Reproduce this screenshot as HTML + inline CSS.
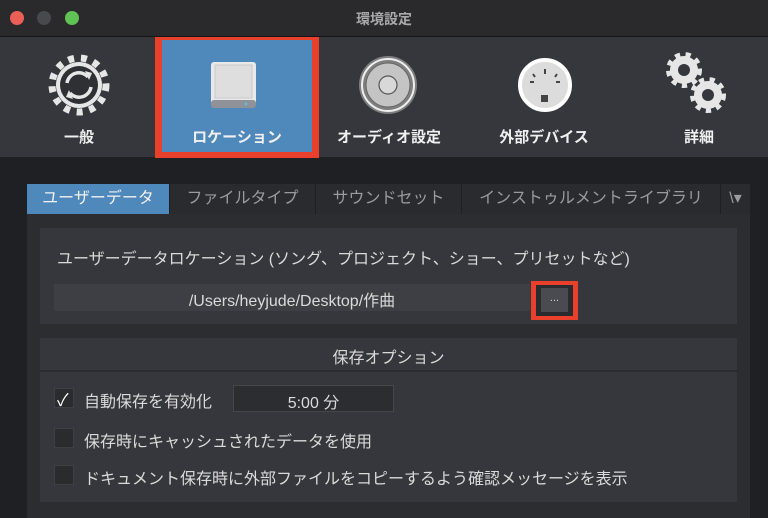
<!DOCTYPE html>
<html><head><meta charset="utf-8"><style>
*{margin:0;padding:0;box-sizing:border-box}
body{width:768px;height:518px;overflow:hidden;background:#1f2023;font-family:"Liberation Sans","Noto Sans CJK JP",sans-serif;position:relative;color:#dcdcdc}
.abs{position:absolute}
.title{left:0;top:0;width:768px;height:37px;background:#2a2a2c;border-bottom:1px solid #161618}
.tb{left:0;top:37px;width:768px;height:120px;background:#35373c}
.lbl{top:126px;font-size:15px;font-weight:bold;color:#f0f0f0;text-align:center;width:150px}
.dot{width:14px;height:14px;border-radius:50%;top:11px}
.tab{top:184px;height:30px;font-size:16px;color:#9a9b9f;text-align:center;line-height:30px;background:#2a2b2f;border-right:1px solid #1e1f22;white-space:nowrap}
.txt{font-size:16px;color:#dadada;white-space:nowrap}
.cb{width:20px;height:20px;border:1px solid #3f4045;background:#2a2b2f;left:54px}
</style></head><body>
<div class="abs title"></div>
<div class="abs dot" style="left:10px;background:#ec5f57"></div>
<div class="abs dot" style="left:37px;background:#48494c"></div>
<div class="abs dot" style="left:65px;background:#5fc453"></div>
<div class="abs" style="left:0;width:768px;top:9px;text-align:center;font-size:14px;font-weight:bold;color:#a9a9ab">環境設定</div>
<div class="abs tb"></div>
<div class="abs" style="left:155px;top:37px;width:164px;height:121px;background:#e8402a"></div>
<div class="abs" style="left:162px;top:40px;width:150px;height:112px;background:#4f88bb"></div>
<svg class="abs" style="left:0;top:37px" width="768" height="90" viewBox="0 37 768 90">
 <circle cx="79" cy="85" r="23" fill="#e6e6e6"/>
 <circle cx="79" cy="85" r="27" fill="none" stroke="#e6e6e6" stroke-width="7" stroke-dasharray="6 6.9"/>
 <circle cx="79" cy="85" r="19" fill="#2e3034"/>
 <path d="M67 83a12 12 0 0 1 21-6" stroke="#e6e6e6" stroke-width="3.5" fill="none"/><path d="M85 71l7 2-3 7z" fill="#e6e6e6"/>
 <path d="M91 87a12 12 0 0 1-21 6" stroke="#e6e6e6" stroke-width="3.5" fill="none"/><path d="M73 99l-7-2 3-7z" fill="#e6e6e6"/>
 <rect x="211" y="62" width="45" height="44" rx="3" fill="#e9e9e9"/>
 <rect x="215" y="65" width="37" height="33" fill="#dedede" stroke="#c9c9c9"/>
 <rect x="211" y="100" width="45" height="8" rx="3" fill="#8f9399"/>
 <circle cx="246" cy="104" r="1.3" fill="#5bc0f0"/>
 <circle cx="388" cy="85" r="29" fill="#7f7f7f"/><circle cx="388" cy="85" r="26" fill="none" stroke="#eee" stroke-width="2"/>
 <circle cx="388" cy="85" r="22" fill="#c4c4c4" stroke="#666" stroke-width="1"/><circle cx="388" cy="85" r="9" fill="#d8d8d8" stroke="#555" stroke-width="1.2"/>
 <circle cx="545" cy="85" r="25" fill="#dcdcdc" stroke="#fff" stroke-width="4"/>
 <g stroke="#444" stroke-width="2"><path d="M545 69v5M533 74l2 3M557 74l-2 3M530 82h4M556 82h4"/></g>
 <rect x="541" y="95" width="7" height="7" fill="#444"/>
 <g fill="#e6e6e6"><circle cx="684" cy="70" r="14"/><circle cx="708" cy="95" r="14"/></g>
 <g stroke="#e6e6e6" stroke-width="6" stroke-dasharray="5 5.3"><circle cx="684" cy="70" r="15" fill="none"/><circle cx="708" cy="95" r="15" fill="none"/></g>
 <circle cx="684" cy="70" r="6" fill="#35373c"/><circle cx="708" cy="95" r="6" fill="#35373c"/>
</svg>
<div class="abs lbl" style="left:4px">一般</div>
<div class="abs lbl" style="left:162px">ロケーション</div>
<div class="abs lbl" style="left:314px">オーディオ設定</div>
<div class="abs lbl" style="left:469px">外部デバイス</div>
<div class="abs lbl" style="left:624px">詳細</div>
<div class="abs" style="left:27px;top:184px;width:723px;height:334px;background:#2c2d31"></div>
<div class="abs tab" style="left:27px;width:143px;background:#4f88bb;color:#f2f2f2">ユーザーデータ</div>
<div class="abs tab" style="left:170px;width:146px">ファイルタイプ</div>
<div class="abs tab" style="left:316px;width:146px">サウンドセット</div>
<div class="abs tab" style="left:462px;width:259px">インストゥルメントライブラリ</div>
<div class="abs tab" style="left:721px;width:29px;border:none">\▾</div>
<div class="abs" style="left:40px;top:228px;width:697px;height:96px;background:#36373c"></div>
<div class="abs txt" style="left:57px;top:245px">ユーザーデータロケーション (ソング、プロジェクト、ショー、プリセットなど)</div>
<div class="abs" style="left:54px;top:284px;width:476px;height:27px;background:#3e3f44"></div>
<div class="abs txt" style="left:54px;top:287px;width:476px;text-align:center">/Users/heyjude/Desktop/作曲</div>
<div class="abs" style="left:531px;top:281px;width:47px;height:39px;background:#e8402a"></div>
<div class="abs" style="left:536px;top:285px;width:37px;height:31px;background:#2a2b2f"></div>
<div class="abs" style="left:541px;top:288px;width:27px;height:24px;background:#4a4b50;color:#ccc;font-size:11px;text-align:center;line-height:20px">...</div>
<div class="abs" style="left:40px;top:338px;width:697px;height:164px;background:#36373c"></div>
<div class="abs" style="left:40px;top:370px;width:697px;height:2px;background:#2a2b2f"></div>
<div class="abs txt" style="left:40px;top:344px;width:697px;text-align:center">保存オプション</div>
<div class="abs cb" style="top:388px"></div>
<div class="abs" style="left:57px;top:386px;font-size:17px;color:#fff">✓</div>
<div class="abs txt" style="left:84px;top:388px">自動保存を有効化</div>
<div class="abs" style="left:233px;top:385px;width:161px;height:27px;background:#2c2d31;border:1px solid #45464b"></div>
<div class="abs txt" style="left:233px;top:389px;width:161px;text-align:center">5:00 分</div>
<div class="abs cb" style="top:428px"></div>
<div class="abs txt" style="left:84px;top:428px">保存時にキャッシュされたデータを使用</div>
<div class="abs cb" style="top:465px"></div>
<div class="abs txt" style="left:84px;top:465px">ドキュメント保存時に外部ファイルをコピーするよう確認メッセージを表示</div>
</body></html>
